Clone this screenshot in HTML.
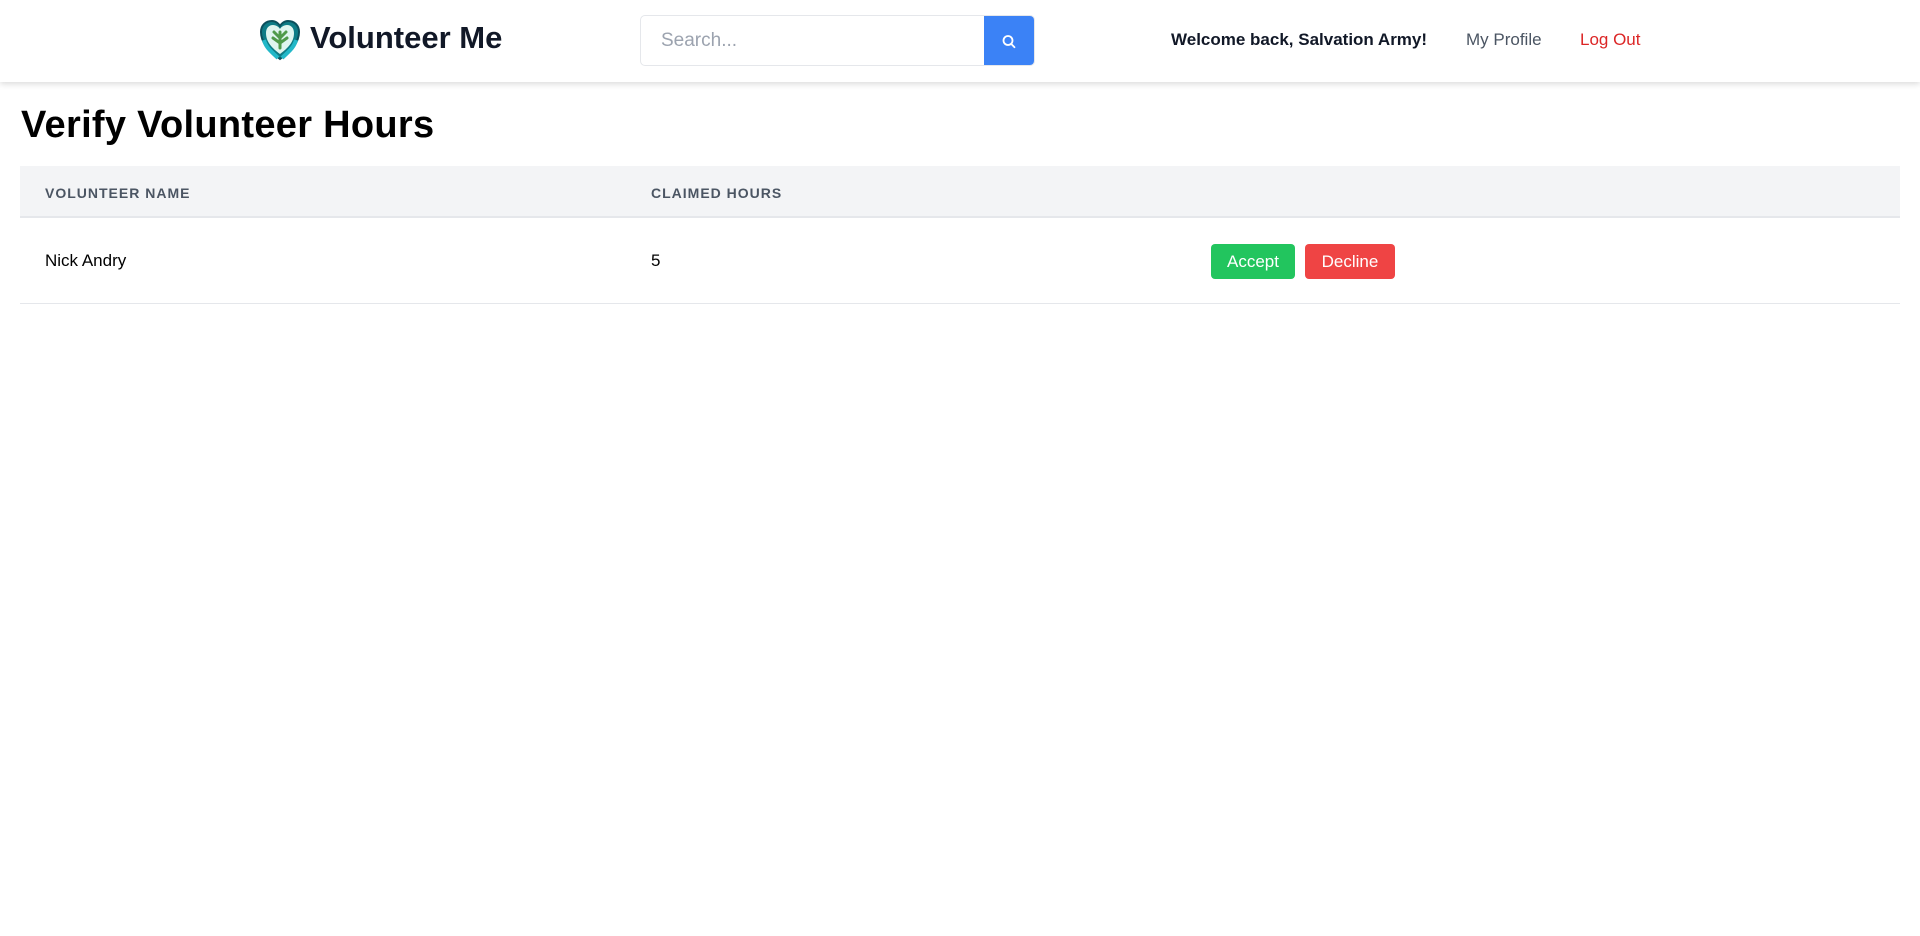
<!DOCTYPE html>
<html><head><meta charset="utf-8"><style>
*{box-sizing:border-box;margin:0;padding:0}
body{width:1920px;height:936px;background:#fff;font-family:"Liberation Sans",sans-serif;color:#111;overflow:hidden;position:relative}
.hdr{position:absolute;left:0;top:0;width:1920px;height:82px;background:#fff;box-shadow:0 2px 6px rgba(0,0,0,.15)}
.logo{position:absolute;left:258px;top:18px;width:44px;height:44px}
.brand{position:absolute;left:310px;top:20px;font-size:31px;font-weight:bold;color:#111827}
.search{position:absolute;left:640px;top:15px;width:395px;height:51px;border:1px solid #e5e7eb;border-radius:5px;overflow:hidden}
.search span{position:absolute;left:20px;top:14px;font-size:19px;color:#9ca3af}
.sbtn{position:absolute;right:0;top:0;width:50px;height:51px;background:#3b82f6}
.nav{position:absolute;top:30px;font-size:17px}
h1{position:absolute;left:21px;top:104px;font-size:38px;font-weight:bold;color:#000;letter-spacing:0.3px}
.th{position:absolute;left:20px;top:166px;width:1880px;height:52px;background:#f3f4f6;border-bottom:2px solid #e5e7eb}
.th span{position:absolute;top:19px;font-size:14px;font-weight:bold;color:#4b5563;letter-spacing:1px}
.row{position:absolute;left:20px;top:218px;width:1880px;height:86px;border-bottom:1px solid #e5e7eb}
.row .t{position:absolute;top:33px;font-size:17px;color:#000}
.btn{position:absolute;top:26px;height:35px;border-radius:4px;color:#fff;font-size:17px;text-align:center;line-height:35px}
</style></head><body>
<div class="hdr">
<svg class="logo" viewBox="0 0 44 44">
<path d="M22 41 C10 32 3 24 3 14 C3 7 8 3 14 3 C18 3 21 6 22 8 C23 6 26 3 30 3 C36 3 41 7 41 14 C41 24 34 32 22 41Z" fill="#0e7c86" stroke="#0b4f5c" stroke-width="2"/>
<path d="M22 36 C14 30 8 24 8 15 C8 10 11 7 15 7 C18 7 21 9 22 11 C23 9 26 7 29 7 C33 7 36 10 36 15 C36 24 30 30 22 36Z" fill="#dff5ef"/>
<path d="M22 30 V14 M22 20 L16 14 M22 20 L28 14 M22 25 L15 20 M22 25 L29 20" stroke="#4f9a4a" stroke-width="3" stroke-linecap="round"/>
<path d="M6 22 C8 30 14 34 20 40 M38 22 C36 30 30 34 24 40" stroke="#22b8c8" stroke-width="4" fill="none"/>
</svg>
<div class="brand">Volunteer Me</div>
<div class="search"><span>Search...</span><div class="sbtn">
<svg width="50" height="51" viewBox="0 0 50 51"><circle cx="24" cy="24.5" r="4.5" stroke="#fff" stroke-width="1.8" fill="none"/><path d="M27.3 28 L30.5 31.2" stroke="#fff" stroke-width="1.8" stroke-linecap="round"/></svg>
</div></div>
<div class="nav" style="left:1171px;font-weight:bold;color:#111827">Welcome back, Salvation Army!</div>
<div class="nav" style="left:1466px;color:#4b5563">My Profile</div>
<div class="nav" style="left:1580px;color:#dc2626">Log Out</div>
</div>
<h1>Verify Volunteer Hours</h1>
<div class="th"><span style="left:25px">VOLUNTEER NAME</span><span style="left:631px">CLAIMED HOURS</span></div>
<div class="row">
<div class="t" style="left:25px">Nick Andry</div>
<div class="t" style="left:631px">5</div>
<div class="btn" style="left:1191px;width:84px;background:#22c55e">Accept</div>
<div class="btn" style="left:1285px;width:90px;background:#ef4444">Decline</div>
</div>
</body></html>
